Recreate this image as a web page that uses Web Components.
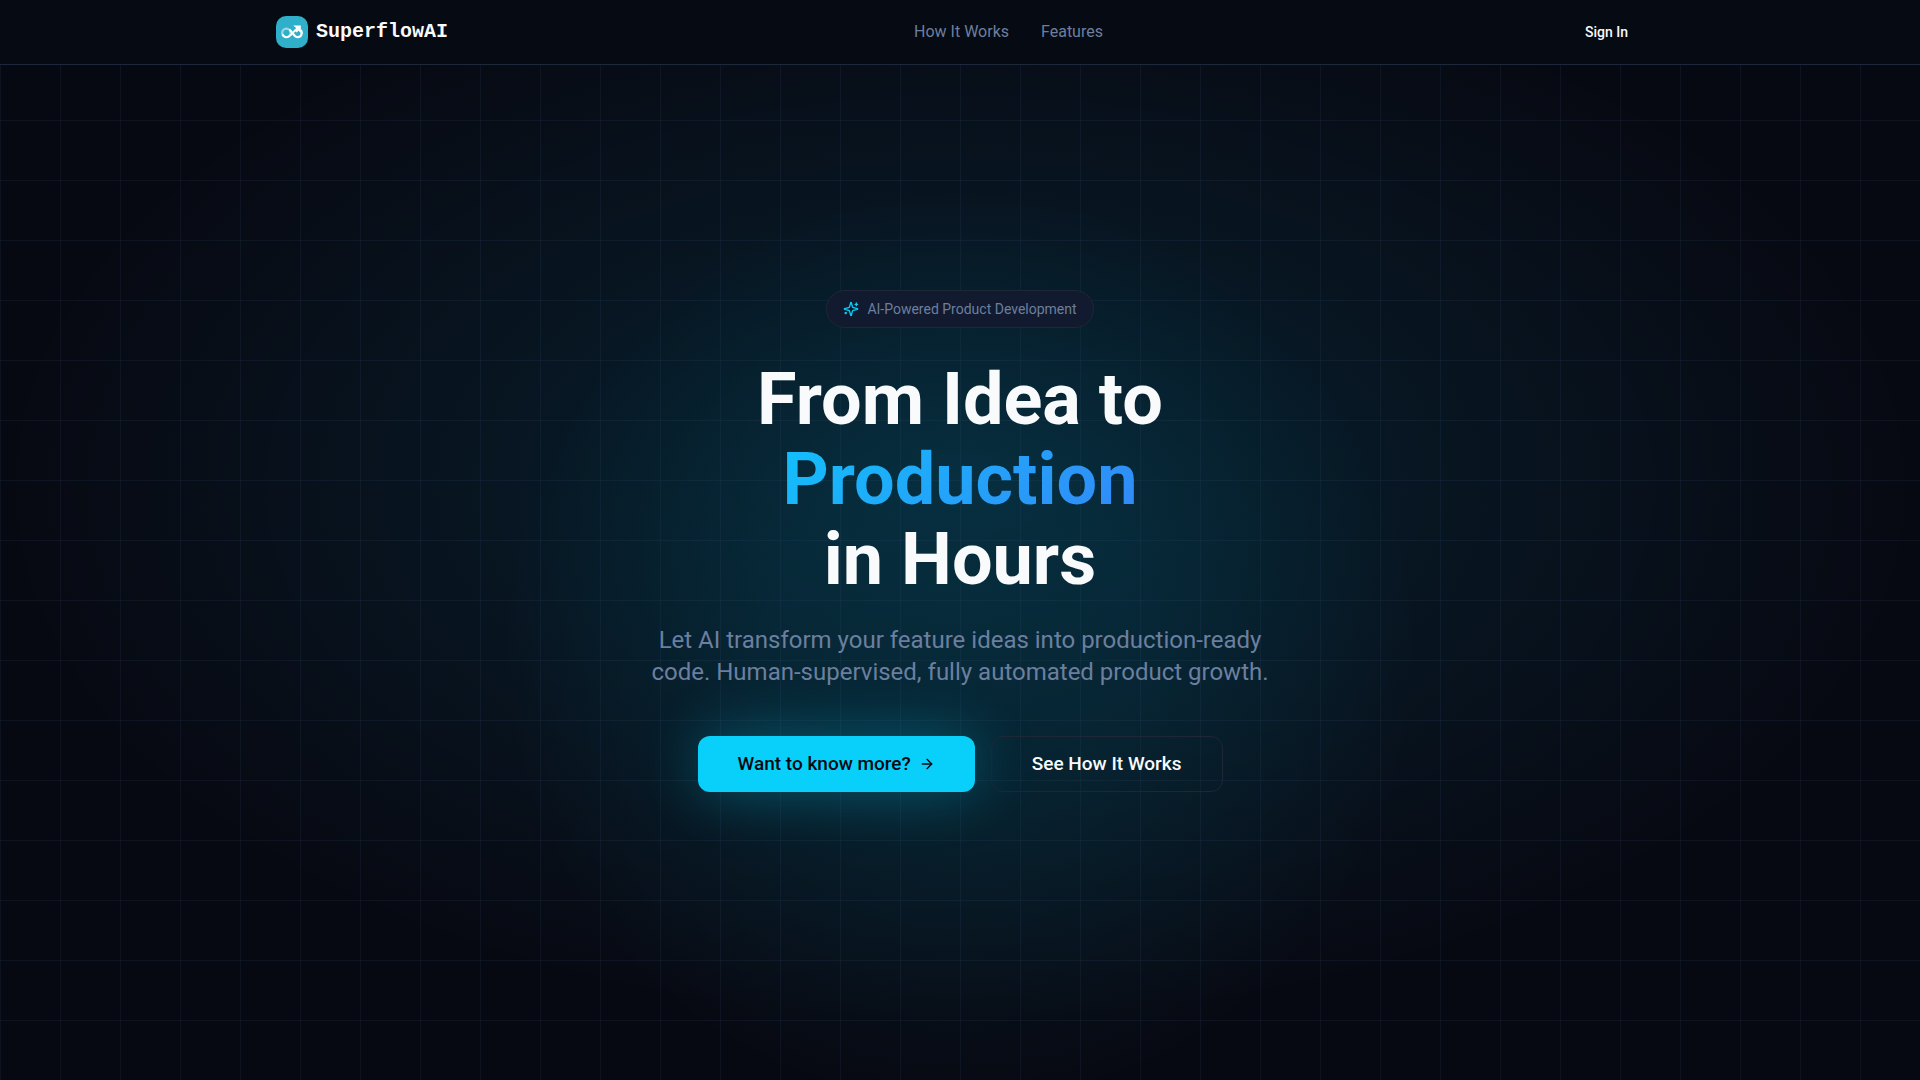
<!DOCTYPE html>
<html lang="en">
<head>
<meta charset="UTF-8">
<meta name="viewport" content="width=device-width, initial-scale=1.0">
<title>SuperflowAI</title>
<style>
  :root{
    --background: #070912;
    --foreground: #f8fafc;
    --muted: #6c7f9f;
    --primary: #09d0fb;
    --font-sans: Roboto, "Noto Sans", sans-serif;
    --font-mono: "Liberation Mono", "DejaVu Sans Mono", monospace;
  }

  body{
    background-color: var(--background);
    color: var(--foreground);
    font-family: var(--font-sans);
    margin: 0;
  }
</style>
</head>
<body>
  <landing-page>
    <site-header slot="header">
      <site-logo slot="brand">SuperflowAI</site-logo>
      <nav-link href="#how-it-works">How It Works</nav-link>
      <nav-link href="#features">Features</nav-link>
      <action-button slot="actions" variant="ghost">Sign In</action-button>
    </site-header>
    <hero-section>
      <hero-badge slot="badge">AI-Powered Product Development</hero-badge>
      <hero-title slot="title"></hero-title>
      <span slot="description">Let AI transform your feature ideas into production-ready code. Human-supervised, fully automated product growth.</span>
      <action-button slot="actions" variant="primary" arrow>Want to know more?</action-button>
      <action-button slot="actions" variant="outline">See How It Works</action-button>
    </hero-section>
  </landing-page>

<script>
class LandingPage extends HTMLElement {
  constructor () {
    super()
    this.shadow = this.attachShadow({ mode: 'open' })
  }

  connectedCallback () {
    this.render()
  }

  render () {
    this.shadow.innerHTML =
    /* html */`
    <style>
      :host{
        display: flex;
        flex-direction: column;
        min-height: 100vh;
        background-image:
          linear-gradient(to right, hsla(217, 33%, 40%, 0.12) 1px, transparent 1px),
          linear-gradient(to bottom, hsla(217, 33%, 40%, 0.12) 1px, transparent 1px),
          radial-gradient(circle 460px at 50% 60%, hsla(189, 100%, 50%, 0.08) 0%, hsla(189, 100%, 50%, 0.07) 40%, hsla(189, 100%, 50%, 0.03) 75%, transparent 100%),
          radial-gradient(50% 50% at 50% 45%, hsla(193, 100%, 50%, 0.13) 0%, transparent 100%);
        background-size: 60px 60px, 60px 60px, auto, auto;
      }

      main{
        display: flex;
        flex: 1;
      }
    </style>

    <slot name="header"></slot>
    <main>
      <slot></slot>
    </main>
    `
  }
}

customElements.define('landing-page', LandingPage)

class SiteHeader extends HTMLElement {
  constructor () {
    super()
    this.shadow = this.attachShadow({ mode: 'open' })
  }

  connectedCallback () {
    this.render()
  }

  render () {
    this.shadow.innerHTML =
    /* html */`
    <style>
      *{
        box-sizing: border-box;
      }

      :host{
        display: block;
        background-color: #060a12;
        border-bottom: 1px solid hsl(217, 33%, 17%);
      }

      header{
        align-items: center;
        display: flex;
        height: 64px;
        justify-content: space-between;
        margin: 0 auto;
        max-width: 1400px;
        padding: 0 16px;
      }

      nav{
        display: flex;
        gap: 32px;
      }
    </style>

    <header>
      <slot name="brand"></slot>
      <nav>
        <slot></slot>
      </nav>
      <slot name="actions"></slot>
    </header>
    `
  }
}

customElements.define('site-header', SiteHeader)

class SiteLogo extends HTMLElement {
  constructor () {
    super()
    this.shadow = this.attachShadow({ mode: 'open' })
  }

  connectedCallback () {
    this.render()
  }

  render () {
    this.shadow.innerHTML =
    /* html */`
    <style>
      :host{
        display: block;
      }

      a{
        align-items: center;
        color: inherit;
        display: flex;
        font-family: var(--font-mono);
        font-size: 20px;
        font-weight: 700;
        gap: 8px;
        line-height: 28px;
        text-decoration: none;
      }

      svg{
        height: 32px;
        width: 32px;
      }
    </style>

    <a href="#">
      <svg xmlns="http://www.w3.org/2000/svg" viewBox="0 0 32 32" fill="none" aria-hidden="true">
        <rect width="32" height="32" rx="10" fill="#2fafc9"/>
        <circle cx="10.4" cy="16.8" r="4.2" stroke="#9bd8e5" stroke-width="2.2"/>
        <path d="M6.4 18.4C7.4 20.6 8.8 21.3 10.4 21.3C14.6 21.3 17 14.8 22 12.2" stroke="#fff" stroke-width="2"/>
        <path d="M13.4 13.6C16.4 15.6 18 21.2 21.6 21.2A4.3 4.3 0 0 0 24.6 14" stroke="#fff" stroke-width="2.2"/>
        <path d="M17.2 9.6H24.8V17L22.6 14.8L20.4 16.6L18.4 14.2L20.2 12Z" fill="#fff"/>
      </svg>
      <slot></slot>
    </a>
    `
  }
}

customElements.define('site-logo', SiteLogo)

class NavLink extends HTMLElement {
  constructor () {
    super()
    this.shadow = this.attachShadow({ mode: 'open' })
  }

  connectedCallback () {
    this.render()
  }

  render () {
    this.shadow.innerHTML =
    /* html */`
    <style>
      :host{
        display: block;
      }

      a{
        color: var(--muted);
        font-size: 16px;
        line-height: 24px;
        text-decoration: none;
      }

      a:hover{
        color: var(--foreground);
      }
    </style>

    <a href="${this.getAttribute('href')}"><slot></slot></a>
    `
  }
}

customElements.define('nav-link', NavLink)

class ActionButton extends HTMLElement {
  constructor () {
    super()
    this.shadow = this.attachShadow({ mode: 'open' })
  }

  connectedCallback () {
    this.render()
  }

  render () {
    const arrow = this.hasAttribute('arrow')
      ? /* html */`<svg xmlns="http://www.w3.org/2000/svg" viewBox="0 0 24 24" aria-hidden="true"><path d="M5 12h14"/><path d="m12 5 7 7-7 7"/></svg>`
      : ''

    this.shadow.innerHTML =
    /* html */`
    <style>
      *{
        box-sizing: border-box;
      }

      :host{
        display: block;
      }

      button{
        align-items: center;
        background-color: transparent;
        border: none;
        border-radius: 12px;
        color: var(--foreground);
        cursor: pointer;
        display: flex;
        font-family: inherit;
        font-size: 19px;
        font-weight: 500;
        gap: 8px;
        height: 56px;
        line-height: 28px;
        padding: 0 40px;
        white-space: nowrap;
      }

      .ghost{
        font-size: 14px;
        height: 36px;
        line-height: 20px;
        padding: 0 16px;
      }

      .primary{
        background-color: var(--primary);
        box-shadow: 0 0 60px hsla(189, 100%, 50%, 0.3);
        color: #060811;
      }

      .outline{
        border: 1px solid #1f2638;
      }

      svg{
        fill: none;
        height: 16px;
        stroke: currentColor;
        stroke-linecap: round;
        stroke-linejoin: round;
        stroke-width: 2;
        width: 16px;
      }
    </style>

    <button type="button" class="${this.getAttribute('variant')}">
      <slot></slot>
      ${arrow}
    </button>
    `
  }
}

customElements.define('action-button', ActionButton)

class HeroBadge extends HTMLElement {
  constructor () {
    super()
    this.shadow = this.attachShadow({ mode: 'open' })
  }

  connectedCallback () {
    this.render()
  }

  render () {
    this.shadow.innerHTML =
    /* html */`
    <style>
      :host{
        align-items: center;
        background-color: #111a2e;
        border: 1px solid #1f2638;
        border-radius: 20px;
        color: var(--muted);
        display: flex;
        font-size: 14px;
        gap: 8px;
        line-height: 20px;
        padding: 8px 16px;
      }

      svg{
        fill: none;
        height: 16px;
        stroke: var(--primary);
        stroke-linecap: round;
        stroke-linejoin: round;
        stroke-width: 2;
        width: 16px;
      }
    </style>

    <svg xmlns="http://www.w3.org/2000/svg" viewBox="0 0 24 24" aria-hidden="true"><path d="M9.937 15.5A2 2 0 0 0 8.5 14.063l-6.135-1.582a.5.5 0 0 1 0-.962L8.5 9.936A2 2 0 0 0 9.937 8.5l1.582-6.135a.5.5 0 0 1 .963 0L14.063 8.5A2 2 0 0 0 15.5 9.937l6.135 1.581a.5.5 0 0 1 0 .964L15.5 14.063a2 2 0 0 0-1.437 1.437l-1.582 6.135a.5.5 0 0 1-.963 0z"/><path d="M20 3v4"/><path d="M22 5h-4"/><path d="M4 17v2"/><path d="M5 18H3"/></svg>
    <slot></slot>
    `
  }
}

customElements.define('hero-badge', HeroBadge)

class HeroTitle extends HTMLElement {
  constructor () {
    super()
    this.shadow = this.attachShadow({ mode: 'open' })
  }

  connectedCallback () {
    this.render()
  }

  render () {
    this.shadow.innerHTML =
    /* html */`
    <style>
      :host{
        display: block;
      }

      h1{
        font-size: 72px;
        font-weight: 700;
        line-height: 80px;
        margin: 0;
        text-align: center;
      }

      .gradient{
        background-image: linear-gradient(135deg, #12c0fb, #3388f7);
        background-clip: text;
        -webkit-background-clip: text;
        color: transparent;
      }
    </style>

    <h1>From Idea to<br><span class="gradient">Production</span><br>in Hours</h1>
    `
  }
}

customElements.define('hero-title', HeroTitle)

class HeroSection extends HTMLElement {
  constructor () {
    super()
    this.shadow = this.attachShadow({ mode: 'open' })
  }

  connectedCallback () {
    this.render()
  }

  render () {
    this.shadow.innerHTML =
    /* html */`
    <style>
      *{
        box-sizing: border-box;
      }

      :host{
        display: flex;
        flex: 1;
      }

      section{
        align-items: center;
        display: flex;
        flex: 1;
        flex-direction: column;
        justify-content: center;
        padding: 0 16px 64px;
      }

      .title{
        margin-top: 32px;
      }

      p{
        color: var(--muted);
        font-size: 24px;
        line-height: 32px;
        margin: 24px 0 48px;
        max-width: 640px;
        text-align: center;
      }

      .actions{
        display: flex;
        flex-wrap: wrap;
        gap: 16px;
        justify-content: center;
      }
    </style>

    <section>
      <slot name="badge"></slot>
      <div class="title">
        <slot name="title"></slot>
      </div>
      <p><slot name="description"></slot></p>
      <div class="actions">
        <slot name="actions"></slot>
      </div>
    </section>
    `
  }
}

customElements.define('hero-section', HeroSection)
</script>
</body>
</html>
